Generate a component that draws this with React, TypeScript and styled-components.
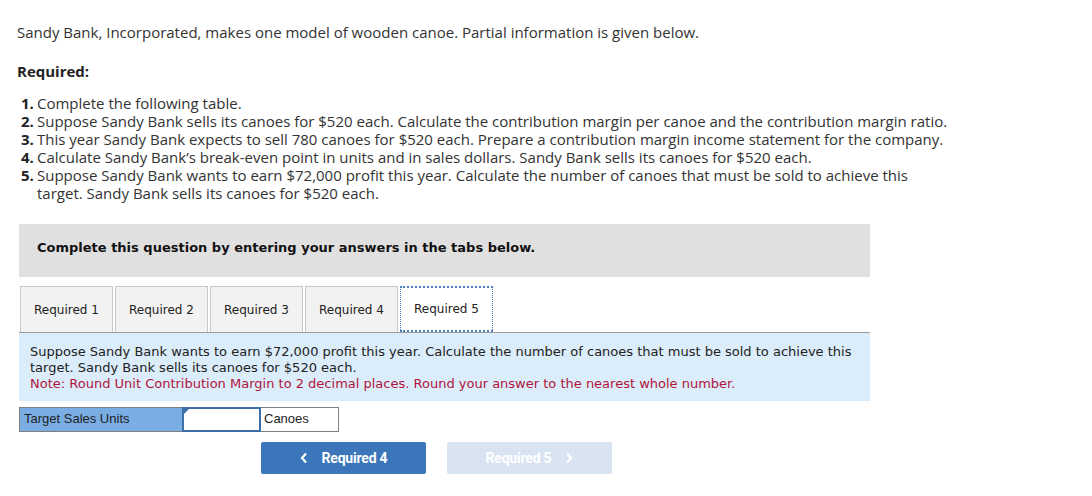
import React from "react";
import styled, { createGlobalStyle } from "styled-components";

const GlobalStyle = createGlobalStyle`
  body {
    margin: 0;
    background: #fff;
    font-family: "Open Sans", "Liberation Sans", sans-serif;
    color: #333;
  }
`;

const Page = styled.div`
  padding: 23px 0 0 17px;
  width: 1075px;
`;

const Intro = styled.p`
  margin: 0;
  font-size: 15px;
  line-height: 18px;
`;

const RequiredTitle = styled.h4`
  margin: 21px 0 0;
  font-size: 15px;
  line-height: 18px;
  font-weight: 700;
  color: #222;
`;

const List = styled.ol`
  margin: 14px 0 0;
  padding: 0;
  list-style: none;
  font-size: 15px;
  line-height: 18px;
`;

const Item = styled.li`
  display: flex;
  padding-left: 4px;
`;

const Num = styled.b`
  flex: 0 0 16px;
  font-weight: 700;
  color: #222;
`;

const ItemText = styled.span`
  max-width: 920px;
`;

const Work = styled.div`
  margin: 22px 0 0 2px;
  width: 851px;
  font-family: "DejaVu Sans", Verdana, sans-serif;
`;

const Banner = styled.div`
  background: #e0e0e0;
  height: 53px;
  box-sizing: border-box;
  display: flex;
  align-items: center;
  padding: 0 0 7px 18px;
  font-size: 13px;
  font-weight: 700;
  color: #111;
`;

const TabBar = styled.div`
  margin-top: 9px;
  display: flex;
  gap: 2px;
  border-bottom: 1px solid #9a9a9a;
  padding-left: 1px;
`;

const Tab = styled.div<{ $active?: boolean }>`
  width: 93px;
  height: 46px;
  box-sizing: border-box;
  display: flex;
  align-items: center;
  justify-content: center;
  font-size: 12px;
  color: #222;
  background: ${(p) => (p.$active ? "#fff" : "#f2f2f2")};
  border: ${(p) => (p.$active ? "2px dotted #4a7fc0" : "1px solid #c8c8c8")};
  border-width: ${(p) => (p.$active ? "2px 1.5px" : "1px")};
  border-bottom: ${(p) => (p.$active ? "2px dotted #4a7fc0" : "none")};
  margin-bottom: ${(p) => (p.$active ? "-1px" : "0")};
`;

const Panel = styled.div`
  background: #dbecfa;
  padding: 11px 11px 9px;
  font-size: 13px;
  line-height: 16px;
  color: #222;
`;

const Note = styled.div`
  color: #b0163c;
`;

const AnswerRow = styled.div`
  margin-top: 6px;
  display: flex;
  height: 25px;
  font-family: "Liberation Sans", Arial, sans-serif;
  font-size: 13px;
`;

const LabelCell = styled.div`
  width: 163px;
  box-sizing: border-box;
  background: #7aade4;
  border: 1px solid #7f7f7f;
  border-right: none;
  padding: 3px 4px;
  color: #222;
`;

const InputCell = styled.div`
  position: relative;
  width: 79px;
  box-sizing: border-box;
  border: 2px solid #3d6ea8;
  background: #fff;
  &::before {
    content: "";
    position: absolute;
    top: 0;
    left: 0;
    border-top: 5px solid #3d6ea8;
    border-right: 5px solid transparent;
  }
`;

const UnitCell = styled.div`
  width: 78px;
  box-sizing: border-box;
  border: 1px solid #7f7f7f;
  border-left: none;
  padding: 3px 3px;
  color: #222;
`;

const NavRow = styled.div`
  margin: 10px 0 0 242px;
  display: flex;
  gap: 21px;
`;

const NavButton = styled.button<{ $disabled?: boolean }>`
  width: 165px;
  height: 32px;
  border: none;
  border-radius: 2px;
  background: ${(p) => (p.$disabled ? "#d8e4f2" : "#3b76ba")};
  color: #fff;
  font-family: Roboto, "Liberation Sans", sans-serif;
  font-weight: 700;
  font-size: 14px;
  letter-spacing: -0.2px;
  display: flex;
  align-items: center;
  justify-content: center;
  gap: 14px;
  cursor: ${(p) => (p.$disabled ? "default" : "pointer")};
`;

const Chevron = ({ dir }: { dir: "left" | "right" }) => (
  <svg width="8" height="12" viewBox="0 0 8 12">
    <path
      d={dir === "left" ? "M6 1.5 L2 6 L6 10.5" : "M2 1.5 L6 6 L2 10.5"}
      fill="none"
      stroke="#fff"
      strokeWidth="2.2"
    />
  </svg>
);

const items = [
  "Complete the following table.",
  "Suppose Sandy Bank sells its canoes for $520 each. Calculate the contribution margin per canoe and the contribution margin ratio.",
  "This year Sandy Bank expects to sell 780 canoes for $520 each. Prepare a contribution margin income statement for the company.",
  "Calculate Sandy Bank’s break-even point in units and in sales dollars. Sandy Bank sells its canoes for $520 each.",
  "Suppose Sandy Bank wants to earn $72,000 profit this year. Calculate the number of canoes that must be sold to achieve this target. Sandy Bank sells its canoes for $520 each.",
];

const App = () => (
  <>
    <GlobalStyle />
    <Page>
      <Intro>
        Sandy Bank, Incorporated, makes one model of wooden canoe. Partial
        information is given below.
      </Intro>
      <RequiredTitle>Required:</RequiredTitle>
      <List>
        {items.map((t, i) => (
          <Item key={i}>
            <Num>{i + 1}.</Num>
            <ItemText>{t}</ItemText>
          </Item>
        ))}
      </List>
      <Work>
        <Banner>Complete this question by entering your answers in the tabs below.</Banner>
        <TabBar>
          {[1, 2, 3, 4, 5].map((n) => (
            <Tab key={n} $active={n === 5}>
              Required {n}
            </Tab>
          ))}
        </TabBar>
        <Panel>
          Suppose Sandy Bank wants to earn $72,000 profit this year. Calculate
          the number of canoes that must be sold to achieve this target. Sandy
          Bank sells its canoes for $520 each.
          <Note>
            Note: Round Unit Contribution Margin to 2 decimal places. Round your
            answer to the nearest whole number.
          </Note>
        </Panel>
        <AnswerRow>
          <LabelCell>Target Sales Units</LabelCell>
          <InputCell />
          <UnitCell>Canoes</UnitCell>
        </AnswerRow>
        <NavRow>
          <NavButton>
            <Chevron dir="left" />
            Required 4
          </NavButton>
          <NavButton $disabled>
            Required 5
            <Chevron dir="right" />
          </NavButton>
        </NavRow>
      </Work>
    </Page>
  </>
);

export default App;
